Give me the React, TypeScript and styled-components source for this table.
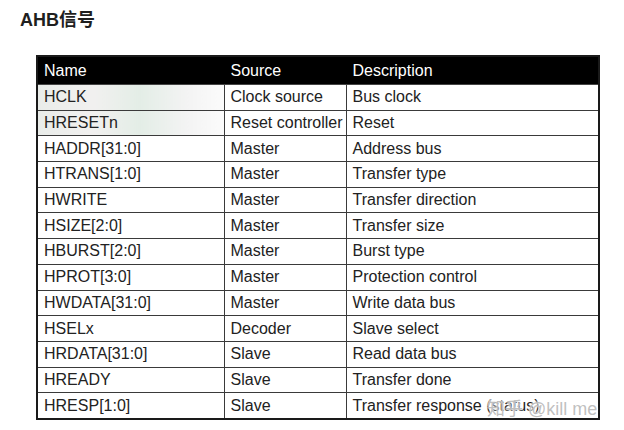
import React from "react";
import styled, { createGlobalStyle } from "styled-components";

const Global = createGlobalStyle`
  html, body { margin: 0; padding: 0; background: #fff; }
  body { font-family: "Liberation Sans", Arial, sans-serif; }
`;

const Page = styled.div`
  position: relative;
  width: 624px;
  height: 430px;
  padding: 9px 0 0 20px;
  box-sizing: border-box;
`;

const Title = styled.h2`
  margin: 0;
  font-family: "Liberation Sans", "Noto Sans CJK SC", sans-serif;
  font-size: 18px;
  font-weight: 700;
  color: #1f1f1f;
  line-height: 22px;
`;

const Table = styled.table`
  margin: 24px 0 0 16px;
  border-collapse: collapse;
  width: 562px;
  table-layout: fixed;
  border: 2px solid #1a1a1a;
  font-size: 16px;
  color: #222;
`;

const Head = styled.th`
  background: #000;
  color: #fff;
  font-weight: 400;
  text-align: left;
  height: 27px;
  padding: 0 0 0 6px;
  border-left: 1px solid #000;
  border-bottom: 1px solid #444;
`;

const Cell = styled.td<{ $shade?: boolean }>`
  height: 24.7px;
  padding: 0 0 0 6px;
  border: 1px solid #3a3a3a;
  white-space: nowrap;
  overflow: hidden;
  background: ${(p) =>
    p.$shade
      ? "linear-gradient(90deg, #e9ece9 0%, #f1f0ef 30%, #e3ede6 55%, #f3f3f3 80%, #fbfbfb 100%)"
      : "#fff"};
`;

const Watermark = styled.div`
  position: absolute;
  left: 487px;
  top: 394px;
  font-family: "Liberation Sans", "Noto Sans CJK SC", sans-serif;
  font-size: 18px;
  color: rgba(175, 175, 175, 0.8);
  text-shadow: 0 0 2px #fff, 0 0 2px #fff;
  pointer-events: none;
`;

const rows: [string, string, string][] = [
  ["HCLK", "Clock source", "Bus clock"],
  ["HRESETn", "Reset controller", "Reset"],
  ["HADDR[31:0]", "Master", "Address bus"],
  ["HTRANS[1:0]", "Master", "Transfer type"],
  ["HWRITE", "Master", "Transfer direction"],
  ["HSIZE[2:0]", "Master", "Transfer size"],
  ["HBURST[2:0]", "Master", "Burst type"],
  ["HPROT[3:0]", "Master", "Protection control"],
  ["HWDATA[31:0]", "Master", "Write data bus"],
  ["HSELx", "Decoder", "Slave select"],
  ["HRDATA[31:0]", "Slave", "Read data bus"],
  ["HREADY", "Slave", "Transfer done"],
  ["HRESP[1:0]", "Slave", "Transfer response (status)"],
];

export default function App() {
  return (
    <Page>
      <Global />
      <Title>AHB信号</Title>
      <Table>
        <colgroup>
          <col style={{ width: 187 }} />
          <col style={{ width: 122 }} />
          <col style={{ width: 253 }} />
        </colgroup>
        <thead>
          <tr>
            <Head>Name</Head>
            <Head>Source</Head>
            <Head>Description</Head>
          </tr>
        </thead>
        <tbody>
          {rows.map((r, i) => (
            <tr key={r[0]}>
              <Cell $shade={i < 2}>{r[0]}</Cell>
              <Cell>{r[1]}</Cell>
              <Cell>{r[2]}</Cell>
            </tr>
          ))}
        </tbody>
      </Table>
      <Watermark>知乎 @kill me</Watermark>
    </Page>
  );
}
